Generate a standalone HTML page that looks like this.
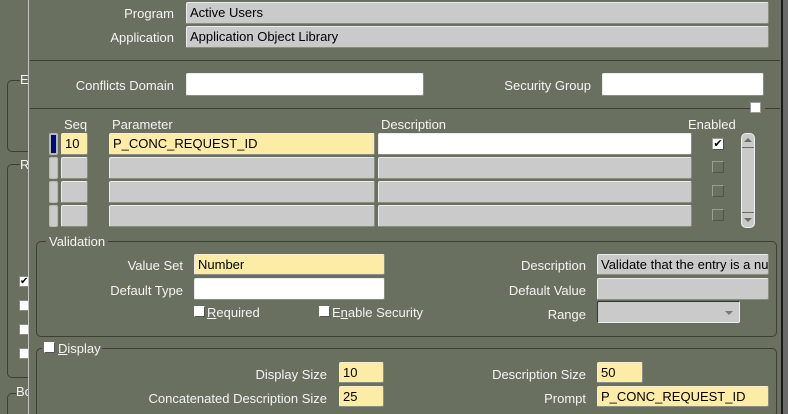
<!DOCTYPE html>
<html style="overflow:hidden;width:788px;height:414px"><head><meta charset="utf-8"><style>
*{margin:0;padding:0;box-sizing:border-box}
body{width:788px;height:414px;overflow:hidden;background:#6a705f;font-family:"Liberation Sans",Arial,sans-serif;font-size:13px;color:#f4f4f4;position:relative}
div,span{position:absolute}
.l{text-align:right;white-space:nowrap;line-height:15px}
.f{border-radius:2px;border:1px solid #ececec;border-right-color:#8a8f80;border-bottom-color:#8a8f80;background:#cacaca;color:#000;padding-left:3px;line-height:19px;white-space:nowrap;overflow:hidden}
.w{background:#fff}
.y{background:#fdeca6}
.g{background:#cacaca}
.hl{height:1px;background:#3c4034}
.bx{border:1px solid #3c4034;border-radius:5px}
.cb{width:11px;height:11px;background:#fff;border:1px solid #8a8f80}
.cg{width:12px;height:12px;border:1px solid #9aa090;border-right-color:#50554a;border-bottom-color:#50554a}
</style></head><body>
<div class="bx" style="left:7px;top:80px;width:40px;height:72px;border-right:none"></div>
<div style="left:20px;top:73px;line-height:14px;background:#6a705f">E</div>
<div class="bx" style="left:7px;top:164px;width:40px;height:214px;border-right:none"></div>
<div style="left:20px;top:158px;line-height:14px;background:#6a705f">R</div>
<div class="bx" style="left:7px;top:393px;width:40px;height:30px;border-right:none"></div>
<div style="left:16px;top:385px;line-height:14px;background:#6a705f">Bo</div>
<div class="cb" style="left:19px;top:276px;font-size:10px;color:#000;line-height:9px">✔</div>
<div class="cb" style="left:19px;top:300px"></div>
<div class="cb" style="left:19px;top:324px"></div>
<div class="cb" style="left:19px;top:348px"></div>

<div style="left:28px;top:0;width:753px;height:414px;background:#6a705f;border-left:1px solid #c4c4c4"></div>
<div style="left:781px;top:0;width:2px;height:414px;background:#1a1a1a"></div>
<div style="left:783px;top:0;width:5px;height:414px;background:#6a6a6a"></div>

<div class="l" style="left:60px;width:114px;top:6px">Program</div>
<div class="f g" style="left:186px;top:2px;width:583px;height:22px">Active Users</div>
<div class="l" style="left:60px;width:114px;top:30px">Application</div>
<div class="f g" style="left:186px;top:26px;width:583px;height:22px">Application Object Library</div>
<div class="hl" style="left:30px;top:60px;width:750px"></div>

<div class="l" style="left:40px;width:134px;top:78px">Conflicts Domain</div>
<div class="f w" style="left:186px;top:73px;width:238px;height:23px"></div>
<div class="l" style="left:460px;width:131px;top:78px">Security Group</div>
<div class="f w" style="left:602px;top:73px;width:162px;height:23px"></div>
<div class="hl" style="left:30px;top:108px;width:720px"></div>
<div class="hl" style="left:765px;top:108px;width:15px"></div>
<div style="left:750px;top:102px;width:11px;height:11px;background:#fff;border:1px solid #9a9a9a"></div>

<div style="left:64px;top:117px;line-height:15px">Seq</div>
<div style="left:112px;top:117px;line-height:15px">Parameter</div>
<div style="left:381px;top:117px;line-height:15px">Description</div>
<div style="left:688px;top:117px;line-height:15px">Enabled</div>

<div style="left:49px;top:133px;width:9px;height:22px;background:#000a80;border:2px solid #b8bcb0;border-radius:2px"></div>
<div class="f y" style="left:61px;top:133px;width:27px;height:22px">10</div>
<div class="f y" style="left:109px;top:133px;width:266px;height:22px">P_CONC_REQUEST_ID</div>
<div class="f w" style="left:378px;top:133px;width:314px;height:22px"></div>
<div class="cg" style="left:712px;top:138px;background:#fff;color:#000;font-size:11px;line-height:10px;text-align:center">✔</div>

<div style="left:49px;top:157px;width:9px;height:22px;background:#cacaca;border:1px solid #b8bcb0;border-radius:2px"></div>
<div class="f" style="left:61px;top:157px;width:27px;height:22px"></div>
<div class="f" style="left:109px;top:157px;width:266px;height:22px"></div>
<div class="f" style="left:378px;top:157px;width:314px;height:22px"></div>
<div class="cg" style="left:712px;top:161px"></div>

<div style="left:49px;top:181px;width:9px;height:22px;background:#cacaca;border:1px solid #b8bcb0;border-radius:2px"></div>
<div class="f" style="left:61px;top:181px;width:27px;height:22px"></div>
<div class="f" style="left:109px;top:181px;width:266px;height:22px"></div>
<div class="f" style="left:378px;top:181px;width:314px;height:22px"></div>
<div class="cg" style="left:712px;top:185px"></div>

<div style="left:49px;top:205px;width:9px;height:22px;background:#cacaca;border:1px solid #b8bcb0;border-radius:2px"></div>
<div class="f" style="left:61px;top:205px;width:27px;height:22px"></div>
<div class="f" style="left:109px;top:205px;width:266px;height:22px"></div>
<div class="f" style="left:378px;top:205px;width:314px;height:22px"></div>
<div class="cg" style="left:712px;top:209px"></div>

<div style="left:741px;top:133px;width:14px;height:95px;background:#cacaca;border:1px solid #f0f0f0;border-radius:5px"></div>
<div style="left:742px;top:147px;width:12px;height:1px;background:#6a705f"></div>
<div style="left:742px;top:212px;width:12px;height:1px;background:#6a705f"></div>
<div style="left:744px;top:138px;width:0;height:0;border-left:4px solid transparent;border-right:4px solid transparent;border-bottom:4px solid #6a705f"></div>
<div style="left:744px;top:218px;width:0;height:0;border-left:4px solid transparent;border-right:4px solid transparent;border-top:4px solid #6a705f"></div>

<div class="bx" style="left:36px;top:241px;width:741px;height:96px"></div>
<div style="left:46px;top:234px;line-height:15px;padding:0 3px;background:#6a705f">Validation</div>
<div class="l" style="left:60px;width:123px;top:258px">Value Set</div>
<div class="f y" style="left:194px;top:254px;width:191px;height:21px">Number</div>
<div class="l" style="left:60px;width:123px;top:283px">Default Type</div>
<div class="f w" style="left:194px;top:278px;width:191px;height:22px"></div>
<div class="cb" style="left:194px;top:306px;border-color:#fff;border-right-color:#555;border-bottom-color:#555"></div>
<div style="left:207px;top:305px;line-height:15px"><u>R</u>equired</div>
<div class="cb" style="left:319px;top:306px;border-color:#fff;border-right-color:#555;border-bottom-color:#555"></div>
<div style="left:332px;top:305px;line-height:15px">E<u>n</u>able Security</div>

<div class="l" style="left:450px;width:136px;top:258px">Description</div>
<div class="f g" style="left:597px;top:254px;width:172px;height:21px">Validate that the entry is a nu</div>
<div class="l" style="left:450px;width:136px;top:283px">Default Value</div>
<div class="f g" style="left:597px;top:278px;width:172px;height:22px"></div>
<div class="l" style="left:450px;width:136px;top:307px">Range</div>
<div style="left:597px;top:301px;width:143px;height:22px;background:#cacaca;border:1px solid #333;border-right-color:#eee;border-bottom-color:#eee;border-radius:2px"></div>
<div style="left:725px;top:311px;width:0;height:0;border-left:4px solid transparent;border-right:4px solid transparent;border-top:4px solid #777"></div>

<div class="bx" style="left:36px;top:348px;width:741px;height:70px"></div>
<div style="left:42px;top:341px;width:60px;height:15px;background:#6a705f"></div>
<div class="cb" style="left:44px;top:342px;border-color:#fff;border-right-color:#555;border-bottom-color:#555"></div>
<div style="left:58px;top:341px;line-height:15px"><u>D</u>isplay</div>
<div class="l" style="left:100px;width:227px;top:367px">Display Size</div>
<div class="f y" style="left:339px;top:362px;width:45px;height:21px">10</div>
<div class="l" style="left:100px;width:227px;top:391px">Concatenated Description Size</div>
<div class="f y" style="left:339px;top:386px;width:45px;height:21px">25</div>
<div class="l" style="left:450px;width:136px;top:367px">Description Size</div>
<div class="f y" style="left:597px;top:362px;width:46px;height:21px">50</div>
<div class="l" style="left:450px;width:136px;top:391px">Prompt</div>
<div class="f y" style="left:597px;top:386px;width:172px;height:21px">P_CONC_REQUEST_ID</div>
</body></html>
